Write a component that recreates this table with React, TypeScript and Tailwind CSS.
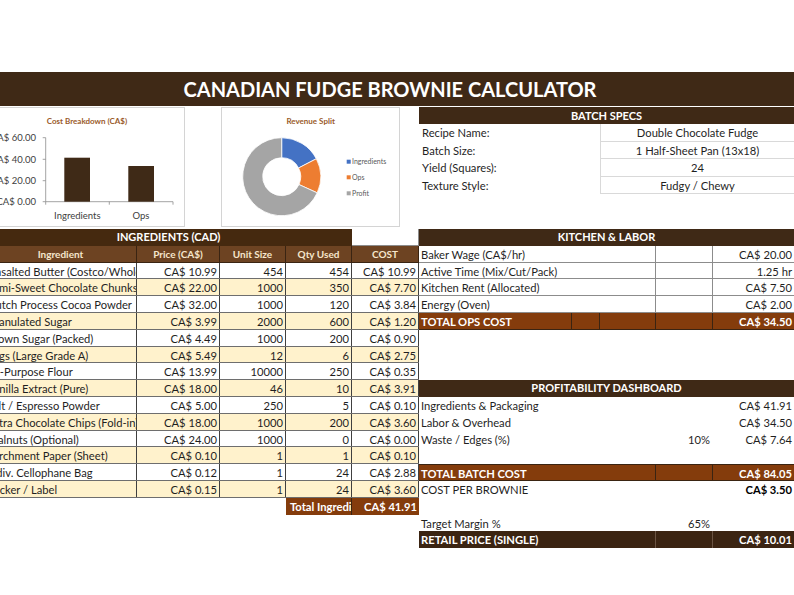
import React from "react";

const ingredients: string[][] = [
  ["Unsalted Butter (Costco/Wholesale)", "CA$ 10.99", "454", "454", "CA$ 10.99"],
  ["Semi-Sweet Chocolate Chunks", "CA$ 22.00", "1000", "350", "CA$ 7.70"],
  ["Dutch Process Cocoa Powder", "CA$ 32.00", "1000", "120", "CA$ 3.84"],
  ["Granulated Sugar", "CA$ 3.99", "2000", "600", "CA$ 1.20"],
  ["Brown Sugar (Packed)", "CA$ 4.49", "1000", "200", "CA$ 0.90"],
  ["Eggs (Large Grade A)", "CA$ 5.49", "12", "6", "CA$ 2.75"],
  ["All-Purpose Flour", "CA$ 13.99", "10000", "250", "CA$ 0.35"],
  ["Vanilla Extract (Pure)", "CA$ 18.00", "46", "10", "CA$ 3.91"],
  ["Salt / Espresso Powder", "CA$ 5.00", "250", "5", "CA$ 0.10"],
  ["Extra Chocolate Chips (Fold-in)", "CA$ 18.00", "1000", "200", "CA$ 3.60"],
  ["Walnuts (Optional)", "CA$ 24.00", "1000", "0", "CA$ 0.00"],
  ["Parchment Paper (Sheet)", "CA$ 0.10", "1", "1", "CA$ 0.10"],
  ["Indiv. Cellophane Bag", "CA$ 0.12", "1", "24", "CA$ 2.88"],
  ["Sticker / Label", "CA$ 0.15", "1", "24", "CA$ 3.60"],
];

const specs = [
  ["Recipe Name:", "Double Chocolate Fudge"],
  ["Batch Size:", "1 Half-Sheet Pan (13x18)"],
  ["Yield (Squares):", "24"],
  ["Texture Style:", "Fudgy / Chewy"],
];

// donut slice, angles as fraction of a turn from 12 o'clock
function slice(cx: number, cy: number, r0: number, r1: number, a0: number, a1: number) {
  const pt = (r: number, a: number) => [cx + r * Math.sin(a * 2 * Math.PI), cy - r * Math.cos(a * 2 * Math.PI)];
  const big = a1 - a0 > 0.5 ? 1 : 0;
  const [x1, y1] = pt(r1, a0);
  const [x2, y2] = pt(r1, a1);
  const [x3, y3] = pt(r0, a1);
  const [x4, y4] = pt(r0, a0);
  return `M${x1} ${y1} A${r1} ${r1} 0 ${big} 1 ${x2} ${y2} L${x3} ${y3} A${r0} ${r0} 0 ${big} 0 ${x4} ${y4} Z`;
}

function CostChart() {
  return (
    <svg width="193" height="118" viewBox="0 0 193 118">
      <text x="96" y="16" textAnchor="middle" fontSize="8" fontWeight="700" fill="#9a5b2a">Cost Breakdown (CA$)</text>
      {[
        ["CA$ 60.00", 29.7],
        ["CA$ 40.00", 51.3],
        ["CA$ 20.00", 72.7],
        ["CA$ 0.00", 93.7],
      ].map(([t, y]) => (
        <g key={t as string}>
          <text x="45" y={(y as number) + 3.3} textAnchor="end" fontSize="9.5" fill="#404040">{t}</text>
          <line x1="51.7" x2="54.7" y1={y as number} y2={y as number} stroke="#8c8c8c" strokeWidth="0.8" />
        </g>
      ))}
      <line x1="54.7" x2="54.7" y1="29.7" y2="93.7" stroke="#8c8c8c" strokeWidth="0.8" />
      <line x1="54.7" x2="182" y1="93.7" y2="93.7" stroke="#8c8c8c" strokeWidth="0.8" />
      {[54.7, 118.3, 182].map((x) => (
        <line key={x} x1={x} x2={x} y1="93.7" y2="96.7" stroke="#8c8c8c" strokeWidth="0.8" />
      ))}
      <rect x="73.3" y="49.7" width="25.7" height="44" fill="#3f2a17" />
      <rect x="137.3" y="58" width="25.7" height="35.7" fill="#3f2a17" />
      <text x="86.3" y="110.5" textAnchor="middle" fontSize="9.5" fill="#404040">Ingredients</text>
      <text x="150" y="110.5" textAnchor="middle" fontSize="9.5" fill="#404040">Ops</text>
    </svg>
  );
}

function RevenueChart() {
  const parts = [
    [0, 0.174, "#4472c4"],
    [0.174, 0.318, "#ed7d31"],
    [0.318, 1, "#a5a5a5"],
  ] as const;
  return (
    <svg width="177" height="118" viewBox="0 0 177 118">
      <text x="88.7" y="16" textAnchor="middle" fontSize="8" fontWeight="700" fill="#9a5b2a">Revenue Split</text>
      {parts.map(([a0, a1, c]) => (
        <path key={c} d={slice(59.7, 68.7, 19, 39, a0, a1 - 0.0001)} fill={c} stroke="#fff" strokeWidth="0.8" />
      ))}
      {[
        ["Ingredients", 53.7, "#4472c4"],
        ["Ops", 69.3, "#ed7d31"],
        ["Profit", 85.3, "#a5a5a5"],
      ].map(([t, y, c]) => (
        <g key={t as string}>
          <rect x="124.7" y={(y as number) - 2} width="4" height="4" fill={c as string} />
          <text x="130" y={(y as number) + 2.4} fontSize="7" fill="#595959">{t}</text>
        </g>
      ))}
    </svg>
  );
}

const row = "flex h-[16.8px] text-[11.2px] leading-[17px] whitespace-nowrap";
const band = "flex h-[16.8px] items-center justify-center text-[11px] font-bold text-white whitespace-nowrap";

export default function App() {
  return (
    <div className="w-[794px] h-[595px] overflow-hidden bg-white text-[#1f1f1f] font-['Lato','Liberation_Sans',sans-serif]">
      <div className="h-[72px]" />
      <div className="h-[34px] bg-[#3f2916] flex items-center justify-center pr-[14px] text-white font-bold text-[20px]">
        CANADIAN FUDGE BROWNIE CALCULATOR
      </div>

      <div className="flex h-[123px]">
        <div className="w-[419px] shrink-0 flex pt-[1px]">
          <div className="-ml-[10px] w-[195px] h-[120px] border border-[#d4d4d4]">
            <CostChart />
          </div>
          <div className="ml-[36px] w-[179px] h-[120px] border border-[#d4d4d4]">
            <RevenueChart />
          </div>
        </div>
        <div className="w-[375px] pt-[1px]">
          <div className="h-[17px] bg-[#3f2916] text-white font-bold text-[11px] leading-[17px] text-center">BATCH SPECS</div>
          {specs.map(([k, v]) => (
            <div key={k} className="flex h-[17.5px] text-[11.2px] leading-[17.5px]">
              <div className="w-[181px] pl-[3px]">{k}</div>
              <div className="flex-1 border-l border-b border-[#d9d9d9] text-center">{v}</div>
            </div>
          ))}
        </div>
      </div>

      <div className="flex">
        {/* ingredients table */}
        <div className="-ml-[15px] w-[434px] shrink-0">
          <div className="flex h-[16.8px]">
            <div className={`${band} w-[367px] bg-[#45290f]`}>INGREDIENTS (CAD)</div>
            <div className="w-[67px] border-r border-b border-[#8c8c8c]" />
          </div>
          <div className="flex h-[16.8px] bg-[#6d4322] text-[#f6e6cc] font-bold text-[10px] leading-[16.5px] text-center border-b border-[#3a2412] whitespace-nowrap">
            <div className="w-[152px] border-r border-[#3a2412]">Ingredient</div>
            <div className="w-[83px] border-r border-[#3a2412]">Price (CA$)</div>
            <div className="w-[66px] border-r border-[#3a2412]">Unit Size</div>
            <div className="w-[66px] border-r border-[#3a2412]">Qty Used</div>
            <div className="w-[67px] border-r border-[#3a2412]">COST</div>
          </div>
          {ingredients.map((r, i) => (
            <div key={r[0]} className={`${row} border-b border-[#6e6e6e] ${i % 2 ? "bg-[#fff2cc]" : "bg-white"}`}>
              <div className="w-[152px] pl-[2px] overflow-hidden border-r border-[#404040]">{r[0]}</div>
              <div className="w-[83px] pr-[2px] text-right border-r border-[#404040]">{r[1]}</div>
              <div className="w-[66px] pr-[2px] text-right border-r border-[#404040]">{r[2]}</div>
              <div className="w-[66px] pr-[2px] text-right border-r border-[#404040]">{r[3]}</div>
              <div className="w-[67px] pr-[2px] text-right border-r border-[#404040]">{r[4]}</div>
            </div>
          ))}
          <div className={`${row} font-bold`}>
            <div className="w-[301px]" />
            <div className="w-[66px] bg-[#843c0c] text-white pl-[4px] overflow-hidden border-r border-[#3a2412]">Total Ingredients</div>
            <div className="w-[67px] bg-[#843c0c] text-white text-right pr-[2px]">CA$ 41.91</div>
          </div>
        </div>

        {/* right panel */}
        <div className="w-[375px] shrink-0">
          <div className={`${band} bg-[#3f2916]`}>KITCHEN &amp; LABOR</div>
          {[
            ["Baker Wage (CA$/hr)", "CA$ 20.00"],
            ["Active Time (Mix/Cut/Pack)", "1.25 hr"],
            ["Kitchen Rent (Allocated)", "CA$ 7.50"],
            ["Energy (Oven)", "CA$ 2.00"],
          ].map(([k, v]) => (
            <div key={k} className={`${row} border-b border-[#8c8c8c]`}>
              <div className="w-[237px] pl-[2px] border-r border-[#8c8c8c]">{k}</div>
              <div className="w-[57px] border-r border-[#8c8c8c]" />
              <div className="flex-1 text-right pr-[2px]">{v}</div>
            </div>
          ))}
          <div className={`${row} bg-[#843c0c] text-white font-bold border-b border-[#3a2412]`}>
            <div className="w-[153px] pl-[2px] border-r border-[#3a2412]">TOTAL OPS COST</div>
            <div className="w-[28px] border-r border-[#3a2412]" />
            <div className="w-[56px] border-r border-[#3a2412]" />
            <div className="w-[57px] border-r border-[#3a2412]" />
            <div className="flex-1 text-right pr-[2px]">CA$ 34.50</div>
          </div>
          <div className="h-[16.8px]" />
          <div className="h-[16.8px]" />
          <div className="h-[16.8px]" />
          <div className={`${band} bg-[#3f2916]`}>PROFITABILITY DASHBOARD</div>
          {[
            ["Ingredients & Packaging", "", "CA$ 41.91"],
            ["Labor & Overhead", "", "CA$ 34.50"],
            ["Waste / Edges (%)", "10%", "CA$ 7.64"],
          ].map(([k, m, v]) => (
            <div key={k} className={row}>
              <div className="w-[237px] pl-[2px]">{k}</div>
              <div className="w-[57px] text-right pr-[3px]">{m}</div>
              <div className="flex-1 text-right pr-[2px]">{v}</div>
            </div>
          ))}
          <div className="h-[16.8px]" />
          <div className={`${row} bg-[#843c0c] text-white font-bold border-y border-[#3a2412]`}>
            <div className="w-[237px] pl-[2px] border-r border-[#3a2412]">TOTAL BATCH COST</div>
            <div className="w-[57px] border-r border-[#3a2412]" />
            <div className="flex-1 text-right pr-[2px]">CA$ 84.05</div>
          </div>
          <div className={row}>
            <div className="w-[294px] pl-[2px]">COST PER BROWNIE</div>
            <div className="flex-1 text-right pr-[2px] font-bold text-black">CA$ 3.50</div>
          </div>
          <div className="h-[16.8px]" />
          <div className={row}>
            <div className="w-[237px] pl-[2px]">Target Margin %</div>
            <div className="w-[57px] text-right pr-[3px]">65%</div>
            <div className="flex-1" />
          </div>
          <div className={`${row} bg-[#3b2412] text-white font-bold`}>
            <div className="w-[237px] pl-[2px] border-r border-[#6b5443]">RETAIL PRICE (SINGLE)</div>
            <div className="w-[57px] border-r border-[#6b5443]" />
            <div className="flex-1 text-right pr-[2px]">CA$ 10.01</div>
          </div>
        </div>
      </div>
    </div>
  );
}
